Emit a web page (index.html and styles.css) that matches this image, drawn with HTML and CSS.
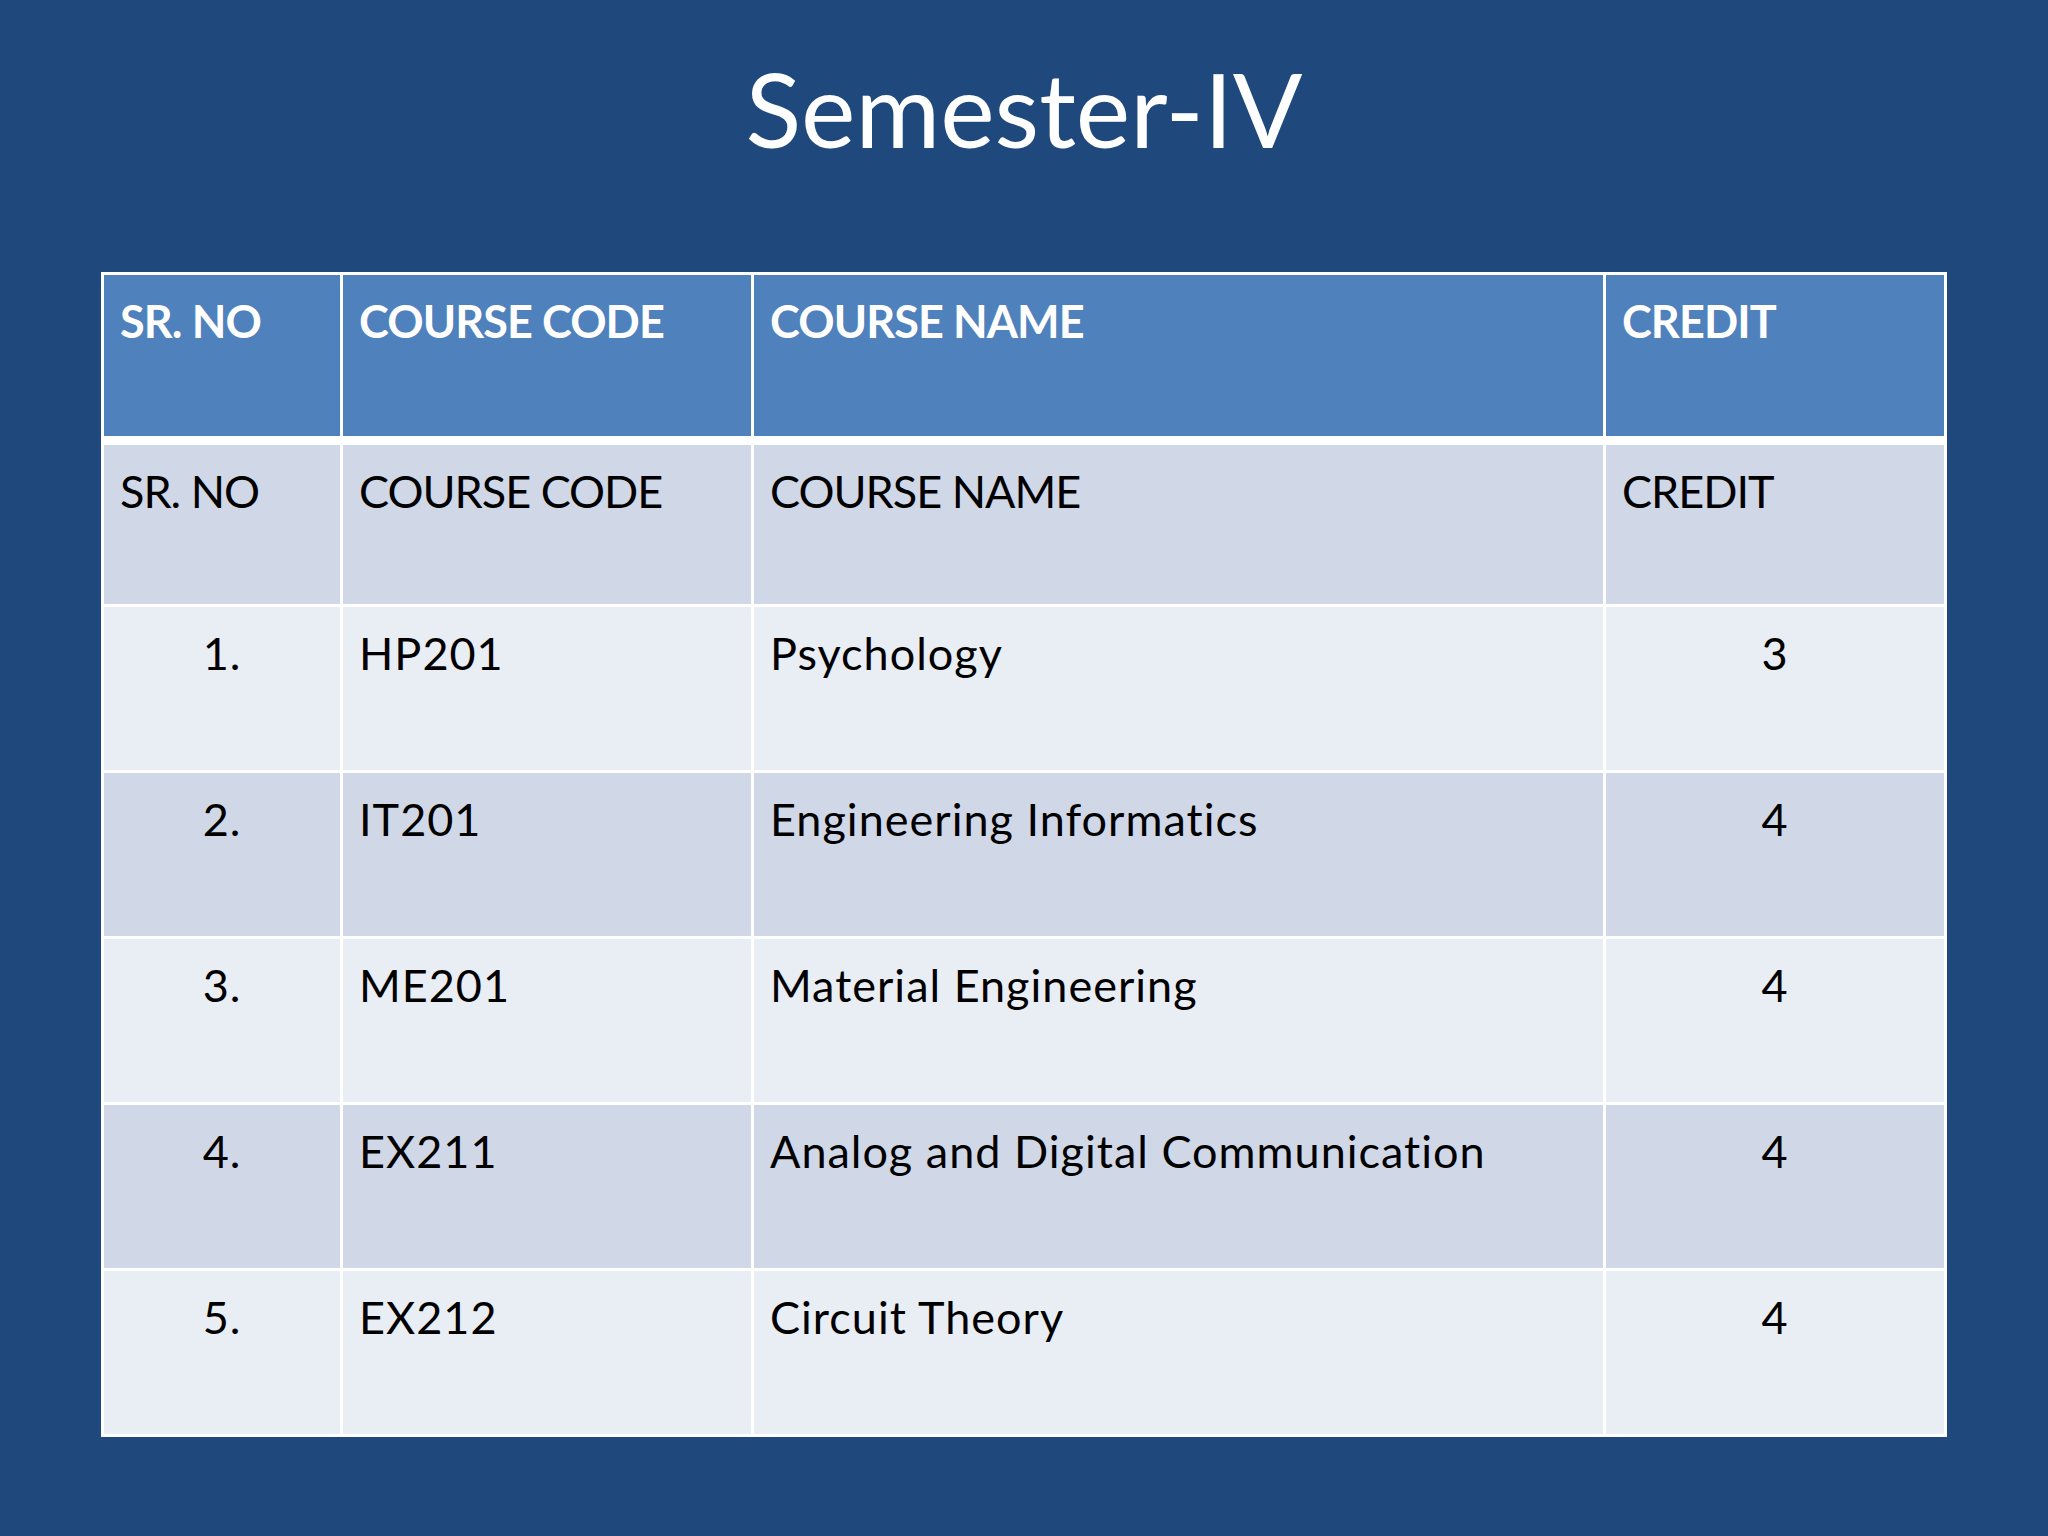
FILE: index.html
```html
<!DOCTYPE html>
<html lang="en">
<head>
<meta charset="utf-8">
<title>Semester-IV</title>
<link rel="stylesheet" href="styles.css">
</head>
<body>
<div class="slide">
  <h1 class="title">Semester-IV</h1>
  <table class="courses">
    <colgroup>
      <col class="c-sr">
      <col class="c-code">
      <col class="c-name">
      <col class="c-credit">
    </colgroup>
    <thead>
      <tr class="head">
        <th>SR. NO</th>
        <th>COURSE CODE</th>
        <th>COURSE NAME</th>
        <th>CREDIT</th>
      </tr>
    </thead>
    <tbody>
      <tr class="band1 caps">
        <td>SR. NO</td>
        <td>COURSE CODE</td>
        <td>COURSE NAME</td>
        <td>CREDIT</td>
      </tr>
      <tr class="band2">
        <td class="num">1.</td>
        <td>HP201</td>
        <td>Psychology</td>
        <td class="num">3</td>
      </tr>
      <tr class="band1">
        <td class="num">2.</td>
        <td>IT201</td>
        <td>Engineering Informatics</td>
        <td class="num">4</td>
      </tr>
      <tr class="band2">
        <td class="num">3.</td>
        <td>ME201</td>
        <td>Material Engineering</td>
        <td class="num">4</td>
      </tr>
      <tr class="band1">
        <td class="num">4.</td>
        <td>EX211</td>
        <td>Analog and Digital Communication</td>
        <td class="num">4</td>
      </tr>
      <tr class="band2">
        <td class="num">5.</td>
        <td>EX212</td>
        <td>Circuit Theory</td>
        <td class="num">4</td>
      </tr>
    </tbody>
  </table>
</div>
</body>
</html>
```

FILE: styles.css
```css
html, body {
  margin: 0;
  padding: 0;
  background: #1f497d;
}

.slide {
  width: 2048px;
  height: 1536px;
  background: #1f497d;
  font-family: Lato, "Open Sans", "Liberation Sans", sans-serif;
  overflow: hidden;
}

.title {
  margin: 0;
  padding-top: 47px;
  height: 220px;
  box-sizing: border-box;
  text-align: center;
  color: #ffffff;
  font-weight: 400;
  font-size: 103px;
  line-height: 1.2;
}

.courses {
  margin-left: 101px;
  margin-top: 52px;
  width: 1843px;
  border-collapse: collapse;
  table-layout: fixed;
  border: 3px solid #ffffff;
}

.c-sr { width: 239px; }
.c-code { width: 411px; }
.c-name { width: 852px; }
.c-credit { width: 341px; }

.courses th,
.courses td {
  border: 3px solid #ffffff;
  vertical-align: top;
  text-align: left;
  padding: 19px 16px 0 16px;
  height: 144px;
  font-size: 45px;
  letter-spacing: 1px;
  line-height: 1.2;
  color: #000000;
  font-weight: 400;
}

.head th {
  background: #4f81bd;
  color: #ffffff;
  font-weight: 700;
  letter-spacing: -0.9px;
  border-bottom: 9px solid #ffffff;
  height: 142px;
}

.courses .caps td {
  letter-spacing: -1px;
  height: 140px;
}

.band1 td { background: #d0d8e8; }
.band2 td { background: #e9edf4; }

.courses td.num {
  text-align: center;
  padding-left: 0;
  padding-right: 0;
}
```
